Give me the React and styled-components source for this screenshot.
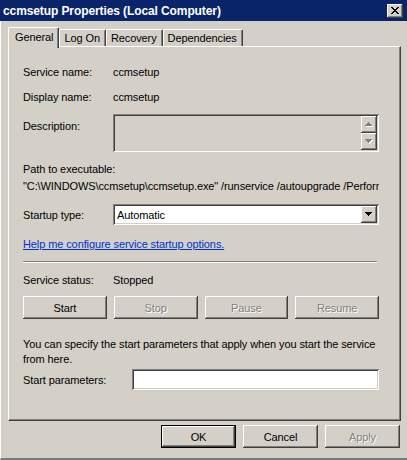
import React from "react";
import styled, { createGlobalStyle } from "styled-components";

const GlobalStyle = createGlobalStyle`
  html, body {
    margin: 0;
    padding: 0;
    background: #d4d0c8;
  }
  body {
    font-family: "Liberation Sans", Arial, sans-serif;
    font-size: 11px;
    letter-spacing: -0.1px;
    color: #000;
  }
`;

const Window = styled.div`
  width: 407px;
  height: 460px;
  background: #d4d0c8;
  display: flex;
  flex-direction: column;
  overflow: hidden;
`;

const TitleBar = styled.div`
  height: 21px;
  flex-shrink: 0;
  background: #0a246a;
  display: flex;
  align-items: center;
  justify-content: space-between;
  padding: 0 4px 0 3px;
`;

const Title = styled.div`
  color: #fff;
  font-weight: bold;
  font-size: 12px;
  letter-spacing: -0.1px;
`;

const raised = `
  background: #d4d0c8;
  box-shadow: inset -1px -1px #404040, inset 1px 1px #fff,
    inset -2px -2px #808080, inset 2px 2px #d4d0c8;
`;

const sunken = `
  box-shadow: inset 1px 1px #808080, inset -1px -1px #fff,
    inset 2px 2px #404040, inset -2px -2px #d4d0c8;
`;

const CloseButton = styled.div`
  ${raised}
  width: 16px;
  height: 14px;
  display: flex;
  align-items: center;
  justify-content: center;
`;

const Body = styled.div`
  flex: 1;
  display: flex;
  flex-direction: column;
  border-left: 1px solid #fff;
  border-bottom: 2px solid #7a7a7a;
  padding: 6px 6px 0 7px;
`;

const TabRow = styled.div`
  height: 19px;
  display: flex;
  align-items: flex-end;
  position: relative;
  z-index: 1;
`;

const Tab = styled.div`
  box-sizing: border-box;
  height: ${(p) => (p.$active ? 21 : 17)}px;
  margin-bottom: ${(p) => (p.$active ? -2 : 0)}px;
  padding: ${(p) => (p.$active ? "0 5px 2px 6px" : "0 5px 0 4px")};
  background: #d4d0c8;
  border-top: 1px solid #fff;
  border-left: 1px solid #fff;
  border-right: 1px solid #404040;
  border-top-left-radius: 2px;
  border-top-right-radius: 2px;
  box-shadow: inset -1px 0 #808080;
  display: flex;
  align-items: center;
`;

const Panel = styled.div`
  box-sizing: border-box;
  height: 375px;
  border-top: 1px solid #fff;
  border-left: 1px solid #fff;
  border-right: 1px solid #404040;
  border-bottom: 1px solid #404040;
  box-shadow: inset -1px -1px #808080;
  padding: 18px 21px 0 14px;
  display: flex;
  flex-direction: column;
`;

const Field = styled.div`
  display: grid;
  grid-template-columns: ${(p) => p.$label || 90}px 1fr;
  align-items: ${(p) => (p.$top ? "start" : "center")};
  margin-top: ${(p) => p.$gap || 0}px;
  min-height: 14px;
`;

const Label = styled.div`
  line-height: 14px;
  padding-top: ${(p) => p.$offset || 0}px;
`;

const Line = styled.div`
  line-height: 14px;
  margin-top: ${(p) => p.$gap || 0}px;
  white-space: nowrap;
  overflow: hidden;
`;

const DescBox = styled.div`
  ${sunken}
  height: 38px;
  background: #d4d0c8;
  display: flex;
  justify-content: flex-end;
  padding: 2px;
  box-sizing: border-box;
`;

const ScrollStack = styled.div`
  width: 16px;
  display: flex;
  flex-direction: column;
`;

const ScrollButton = styled.div`
  ${raised}
  flex: 1;
  display: flex;
  align-items: center;
  justify-content: center;
`;

const Select = styled.div`
  ${sunken}
  height: 21px;
  box-sizing: border-box;
  background: #fff;
  padding: 2px;
  display: flex;
  align-items: center;
`;

const SelectValue = styled.div`
  flex: 1;
  padding-left: 2px;
`;

const DropButton = styled.div`
  ${raised}
  width: 16px;
  height: 17px;
  display: flex;
  align-items: center;
  justify-content: center;
`;

const Link = styled.a`
  color: #0033cc;
  text-decoration: underline;
  line-height: 14px;
  margin-top: 12px;
  cursor: pointer;
  align-self: flex-start;
`;

const Separator = styled.div`
  margin-top: 10px;
  width: 354px;
  height: 1px;
  background: #808080;
  border-bottom: 1px solid #fff;
`;

const ButtonGrid = styled.div`
  display: grid;
  grid-template-columns: repeat(4, 1fr);
  gap: 7px;
  margin-top: 9px;
`;

const Button = styled.div`
  ${raised}
  box-sizing: border-box;
  height: 23px;
  width: ${(p) => (p.$width ? `${p.$width}px` : "auto")};
  display: flex;
  align-items: center;
  justify-content: center;
  color: ${(p) => (p.$disabled ? "#808080" : "#000")};
  text-shadow: ${(p) => (p.$disabled ? "1px 1px #fff" : "none")};
  ${(p) =>
    p.$default &&
    `box-shadow: inset 0 0 0 1px #000, inset -2px -2px #404040, inset 2px 2px #fff, inset -3px -3px #808080;`}
`;

const Paragraph = styled.div`
  margin-top: 18px;
  line-height: 15px;
  white-space: nowrap;
`;

const TextInput = styled.div`
  ${sunken}
  height: 21px;
  background: #fff;
`;

const Footer = styled.div`
  display: flex;
  justify-content: flex-end;
  gap: 7px;
  margin-top: 4px;
  padding-right: 1px;
`;

const CloseGlyph = () => (
  <svg width="8" height="7" viewBox="0 0 8 7" shapeRendering="crispEdges">
    <path
      d="M0 0h2v1h-2zM6 0h2v1h-2zM1 1h2v1h-2zM5 1h2v1h-2zM2 2h4v1h-4zM3 3h2v1h-2zM2 4h4v1h-4zM1 5h2v1h-2zM5 5h2v1h-2zM0 6h2v1h-2zM6 6h2v1h-2z"
      fill="#000"
    />
  </svg>
);

const Arrow = ({ up, color = "#000", shadow }) => (
  <svg width="8" height="5" viewBox="0 0 8 5" shapeRendering="crispEdges">
    {shadow && (
      <path
        d={up ? "M4 1h1v1h1v1h1v1h1v1h-7z" : "M1 1h7v1h-1v1h-1v1h-1v1h-1z"}
        fill="#fff"
      />
    )}
    <path
      d={up ? "M3 0h1v1h1v1h1v1h1v1h-7v-1h1v-1h1v-1h1z" : "M0 0h7v1h-1v1h-1v1h-1v1h-1v-1h-1v-1h-1v-1h-1z"}
      fill={color}
    />
  </svg>
);

export default function App() {
  return (
    <>
      <GlobalStyle />
      <Window>
        <TitleBar>
          <Title>ccmsetup Properties (Local Computer)</Title>
          <CloseButton>
            <CloseGlyph />
          </CloseButton>
        </TitleBar>
        <Body>
          <TabRow>
            <Tab $active>General</Tab>
            <Tab>Log On</Tab>
            <Tab>Recovery</Tab>
            <Tab>Dependencies</Tab>
          </TabRow>
          <Panel>
            <Field>
              <Label>Service name:</Label>
              <Label>ccmsetup</Label>
            </Field>
            <Field $gap={11}>
              <Label>Display name:</Label>
              <Label>ccmsetup</Label>
            </Field>
            <Field $gap={10} $top>
              <Label $offset={5}>Description:</Label>
              <DescBox>
                <ScrollStack>
                  <ScrollButton>
                    <Arrow up color="#808080" shadow />
                  </ScrollButton>
                  <ScrollButton>
                    <Arrow color="#808080" shadow />
                  </ScrollButton>
                </ScrollStack>
              </DescBox>
            </Field>
            <Line $gap={10}>Path to executable:</Line>
            <Line $gap={3}>
              "C:\WINDOWS\ccmsetup\ccmsetup.exe" /runservice /autoupgrade /PerformanceTuning
            </Line>
            <Field $gap={11}>
              <Label>Startup type:</Label>
              <Select>
                <SelectValue>Automatic</SelectValue>
                <DropButton>
                  <Arrow />
                </DropButton>
              </Select>
            </Field>
            <Link>Help me configure service startup options.</Link>
            <Separator />
            <Field $gap={10}>
              <Label>Service status:</Label>
              <Label>Stopped</Label>
            </Field>
            <ButtonGrid>
              <Button>Start</Button>
              <Button $disabled>Stop</Button>
              <Button $disabled>Pause</Button>
              <Button $disabled>Resume</Button>
            </ButtonGrid>
            <Paragraph>
              You can specify the start parameters that apply when you start the service
              <br />
              from here.
            </Paragraph>
            <Field $gap={2} $label={109}>
              <Label>Start parameters:</Label>
              <TextInput />
            </Field>
          </Panel>
          <Footer>
            <Button $width={75} $default>OK</Button>
            <Button $width={75}>Cancel</Button>
            <Button $width={75} $disabled>Apply</Button>
          </Footer>
        </Body>
      </Window>
    </>
  );
}
